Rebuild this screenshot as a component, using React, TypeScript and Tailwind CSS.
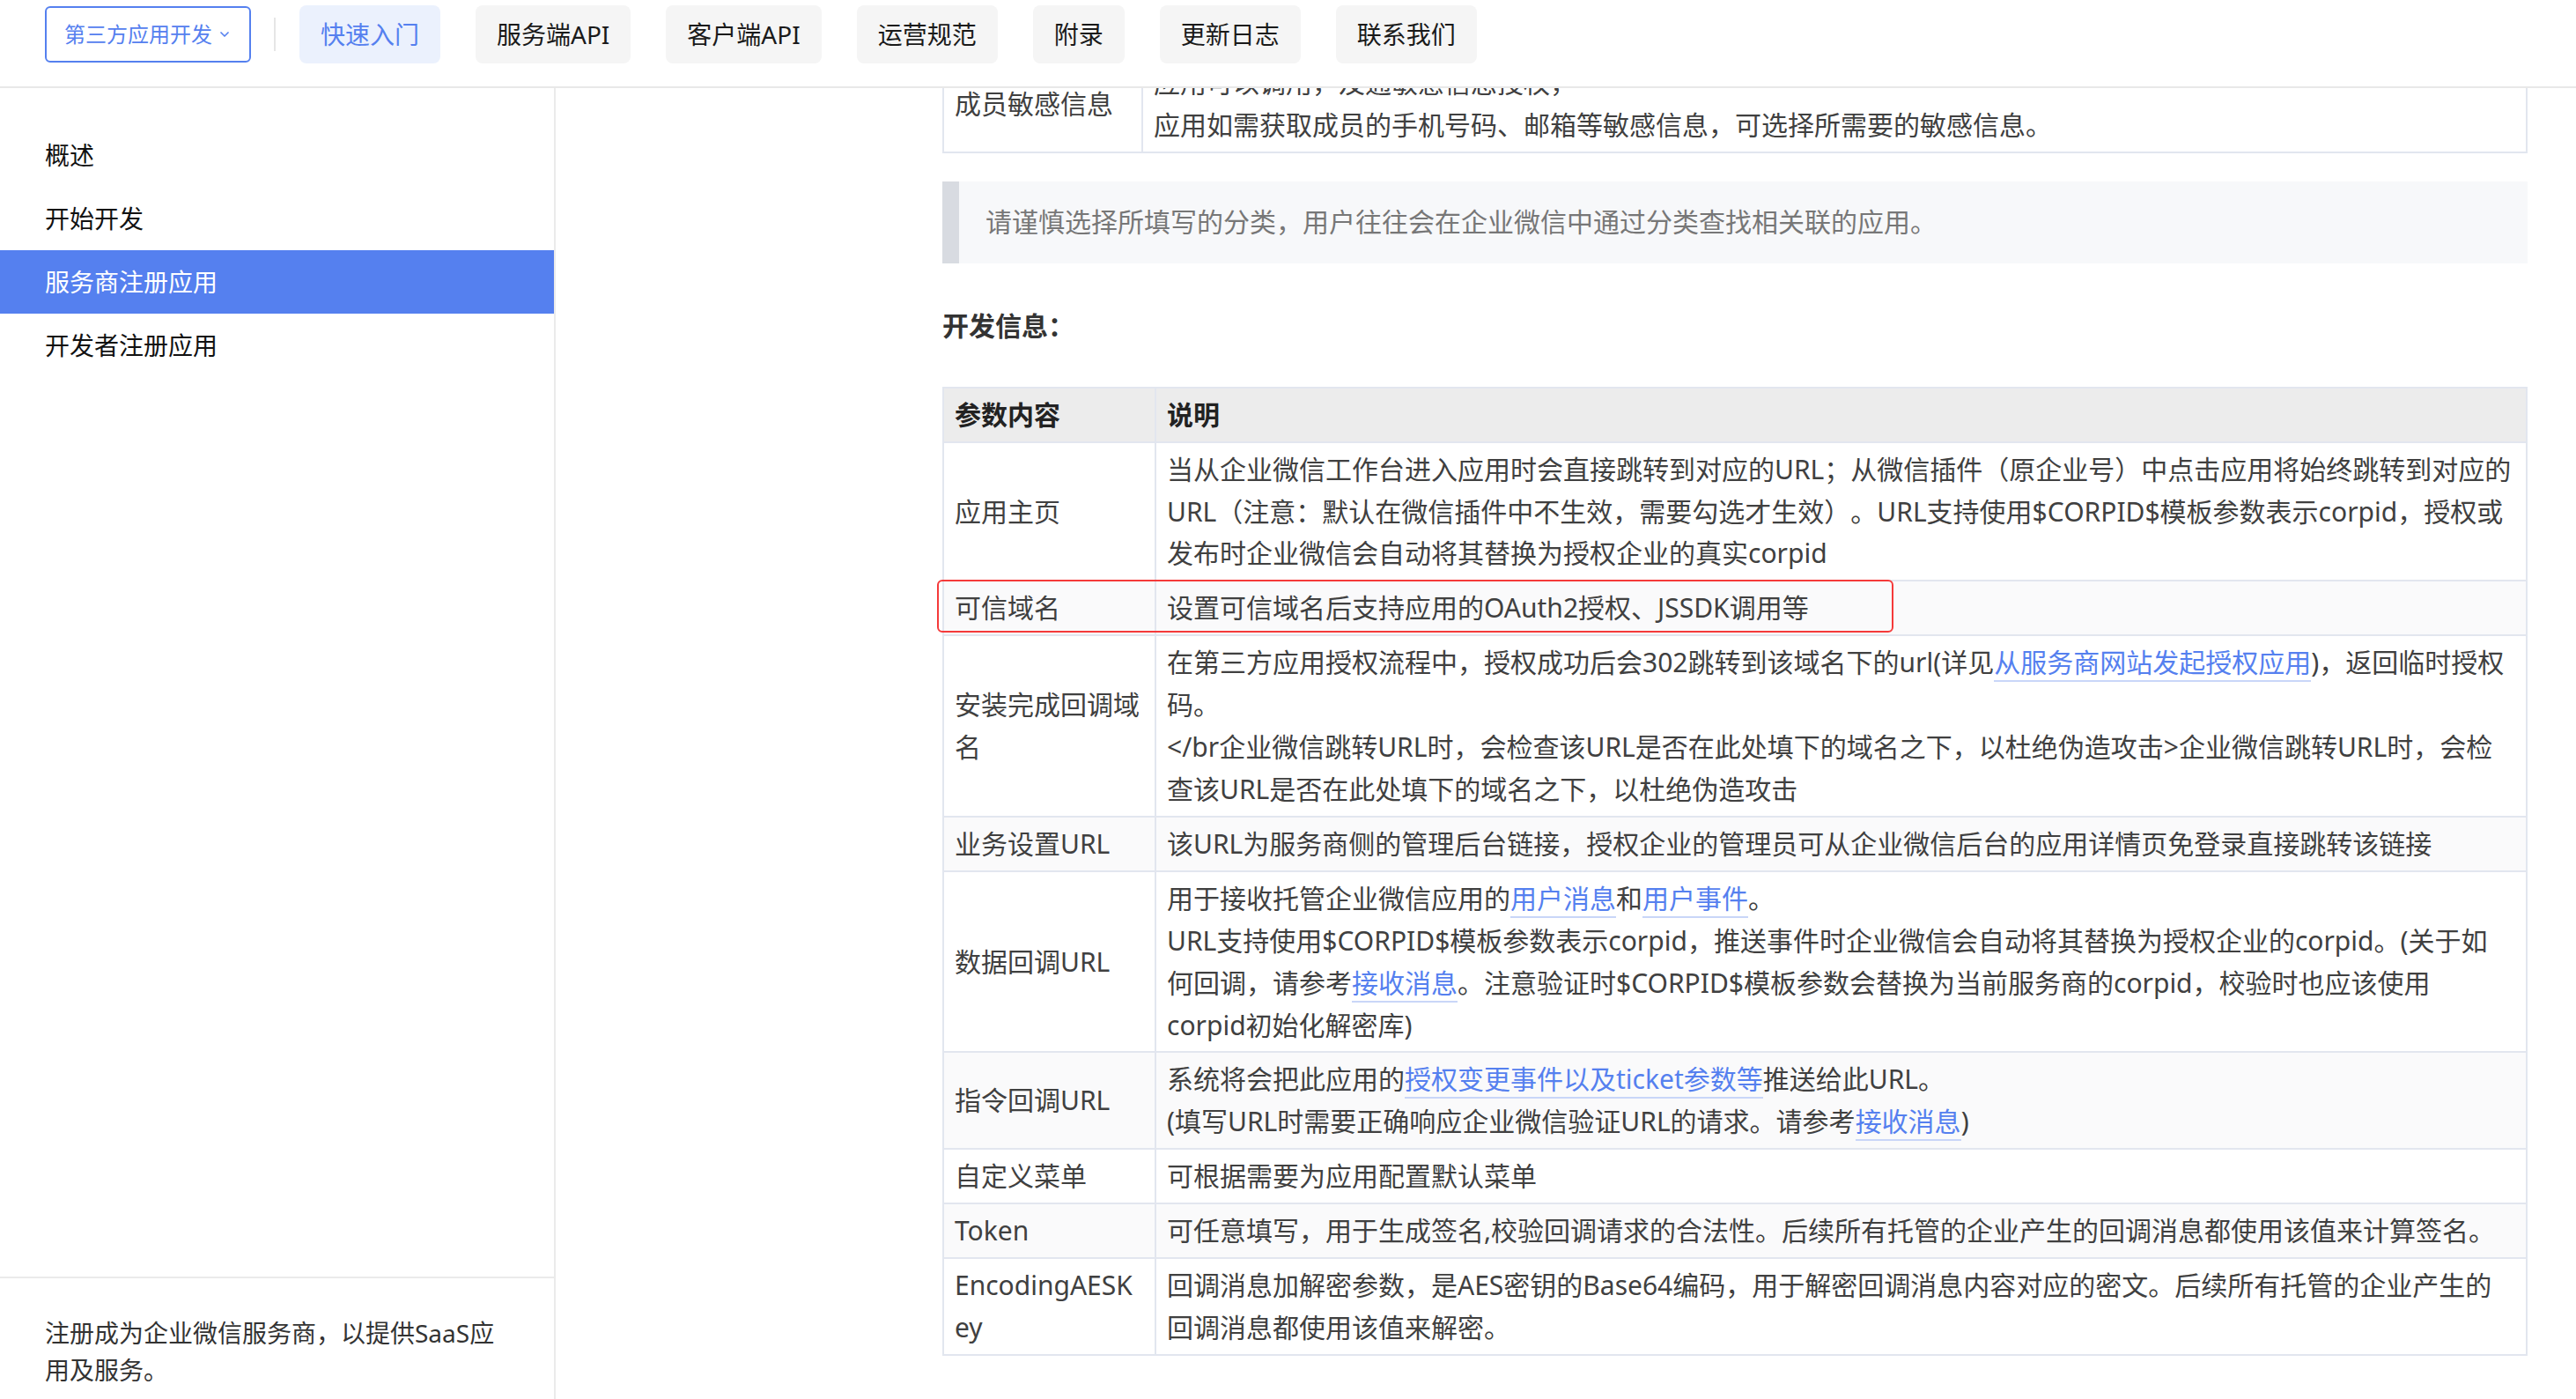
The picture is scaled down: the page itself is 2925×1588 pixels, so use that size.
import { ChevronDown } from "lucide-react";
import type { ReactNode } from "react";

const tabs = ["服务端API", "客户端API", "运营规范", "附录", "更新日志", "联系我们"];
const sideItems = ["概述", "开始开发", "服务商注册应用", "开发者注册应用"];

function A({ children }: { children: ReactNode }) {
    return <a className="text-[#5580ef] border-b-2 border-[#c9d6f8]">{children}</a>;
}

const rows: { name: string; desc: ReactNode }[] = [
    {
        name: "应用主页",
        desc: "当从企业微信工作台进入应用时会直接跳转到对应的URL；从微信插件（原企业号）中点击应用将始终跳转到对应的URL（注意：默认在微信插件中不生效，需要勾选才生效）。URL支持使用$CORPID$模板参数表示corpid，授权或发布时企业微信会自动将其替换为授权企业的真实corpid",
    },
    { name: "可信域名", desc: "设置可信域名后支持应用的OAuth2授权、JSSDK调用等" },
    {
        name: "安装完成回调域名",
        desc: (
            <>
                在第三方应用授权流程中，授权成功后会302跳转到该域名下的url(详见<A>从服务商网站发起授权应用</A>)，返回临时授权码。
                <br />
                {"</br企业微信跳转URL时，会检查该URL是否在此处填下的域名之下，以杜绝伪造攻击>企业微信跳转URL时，会检查该URL是否在此处填下的域名之下，以杜绝伪造攻击"}
            </>
        ),
    },
    { name: "业务设置URL", desc: "该URL为服务商侧的管理后台链接，授权企业的管理员可从企业微信后台的应用详情页免登录直接跳转该链接" },
    {
        name: "数据回调URL",
        desc: (
            <>
                用于接收托管企业微信应用的<A>用户消息</A>和<A>用户事件</A>。
                <br />
                URL支持使用$CORPID$模板参数表示corpid，推送事件时企业微信会自动将其替换为授权企业的corpid。(关于如
                <br />
                何回调，请参考<A>接收消息</A>。注意验证时$CORPID$模板参数会替换为当前服务商的corpid，校验时也应该使用
                <br />
                corpid初始化解密库)
            </>
        ),
    },
    {
        name: "指令回调URL",
        desc: (
            <>
                系统将会把此应用的<A>授权变更事件以及ticket参数等</A>推送给此URL。
                <br />
                (填写URL时需要正确响应企业微信验证URL的请求。请参考<A>接收消息</A>)
            </>
        ),
    },
    { name: "自定义菜单", desc: "可根据需要为应用配置默认菜单" },
    { name: "Token", desc: "可任意填写，用于生成签名,校验回调请求的合法性。后续所有托管的企业产生的回调消息都使用该值来计算签名。" },
    {
        name: "EncodingAESKey",
        desc: "回调消息加解密参数，是AES密钥的Base64编码，用于解密回调消息内容对应的密文。后续所有托管的企业产生的回调消息都使用该值来解密。",
    },
];

export default function App() {
    return (
        <div className="h-screen w-full flex flex-col overflow-hidden bg-white font-['Noto_Sans','Noto_Sans_CJK_SC',sans-serif]">
            <header className="relative z-10 h-[100px] shrink-0 bg-white border-b-2 border-[#e8e8e8] flex items-start pl-[51px] pt-[6px]">
                <button className="mt-[1px] w-[234px] h-[64px] flex items-center justify-center gap-[6px] border-2 border-[#5580ef] rounded-[6px] text-[24px] text-[#5580ef]">
                    第三方应用开发
                    <ChevronDown size={16} strokeWidth={2.5} />
                </button>
                <div className="w-[2px] h-[38px] mt-[14px] ml-[26px] mr-[27px] bg-[#e6e6e6]" />
                <div className="flex gap-[40px]">
                    <a className="h-[66px] px-[24px] flex items-center rounded-[8px] bg-[#ebf1fd] text-[28px] text-[#5580ef]">快速入门</a>
                    {tabs.map((t) => (
                        <a key={t} className="h-[66px] px-[24px] flex items-center rounded-[8px] bg-[#f5f5f5] text-[28px] text-[#1a1a1a]">
                            {t}
                        </a>
                    ))}
                </div>
            </header>

            <div className="flex-1 flex min-h-0">
                <aside className="w-[631px] shrink-0 border-r-2 border-[#ebebeb] flex flex-col justify-between">
                    <nav className="pt-[40px] flex flex-col">
                        {sideItems.map((s, i) => (
                            <a
                                key={s}
                                className={
                                    i === 2
                                        ? "h-[72px] pl-[51px] flex items-center text-[28px] text-white bg-[#5580ef]"
                                        : "h-[72px] pl-[51px] flex items-center text-[28px] text-[#111]"
                                }
                            >
                                {s}
                            </a>
                        ))}
                    </nav>
                    <div className="border-t-2 border-[#ebebeb] px-[51px] pt-[41px] pb-[12px] text-[28px] leading-[42px] text-[#333]">
                        注册成为企业微信服务商，以提供SaaS应用及服务。
                    </div>
                </aside>

                <main className="flex-1 min-w-0 overflow-hidden pl-[439px] pr-[55px] text-[30px] leading-[47.9px] text-[#404040] [text-spacing-trim:space-all]">
                    <table className="w-full -mt-[38px] border-collapse table-fixed">
                        <tbody>
                            <tr>
                                <td className="w-[226px] border-2 border-[#e2e6ef] pl-[12px] pr-[10px] py-[6px] align-middle">成员敏感信息</td>
                                <td className="border-2 border-[#e2e6ef] pl-[12px] pr-[10px] py-[6px]">
                                    应用可以调用，及通敏感信息授权，
                                    <br />
                                    应用如需获取成员的手机号码、邮箱等敏感信息，可选择所需要的敏感信息。
                                </td>
                            </tr>
                        </tbody>
                    </table>

                    <blockquote className="mt-[32px] h-[93px] pl-[30px] flex items-center bg-[#f7f8fa] border-l-[19px] border-[#d8dbe1] text-[#777]">
                        请谨慎选择所填写的分类，用户往往会在企业微信中通过分类查找相关联的应用。
                    </blockquote>

                    <h3 className="mt-[47px] mb-[45px] font-bold text-[#333]">开发信息：</h3>

                    <div className="relative">
                        <table className="w-full border-collapse table-fixed">
                            <thead>
                                <tr className="bg-[#ececec] text-left text-[#222]">
                                    <th className="w-[241px] border-2 border-[#e2e6ef] pl-[12px] pr-[10px] py-[6px] font-bold">参数内容</th>
                                    <th className="border-2 border-[#e2e6ef] pl-[12px] pr-[10px] py-[6px] font-bold">说明</th>
                                </tr>
                            </thead>
                            <tbody>
                                {rows.map((r, i) => (
                                    <tr key={r.name} className={i % 2 === 1 ? "bg-[#fafafb]" : "bg-white"}>
                                        <td className="border-2 border-[#e2e6ef] pl-[12px] pr-[10px] py-[6px] break-all">{r.name}</td>
                                        <td className="border-2 border-[#e2e6ef] pl-[12px] pr-[10px] py-[6px]">{r.desc}</td>
                                    </tr>
                                ))}
                            </tbody>
                        </table>
                        <div className="absolute left-[-6px] top-[219px] w-[1086px] h-[60px] border-2 border-[#f53a3a] rounded-[6px]" />
                    </div>
                </main>
            </div>
        </div>
    );
}
